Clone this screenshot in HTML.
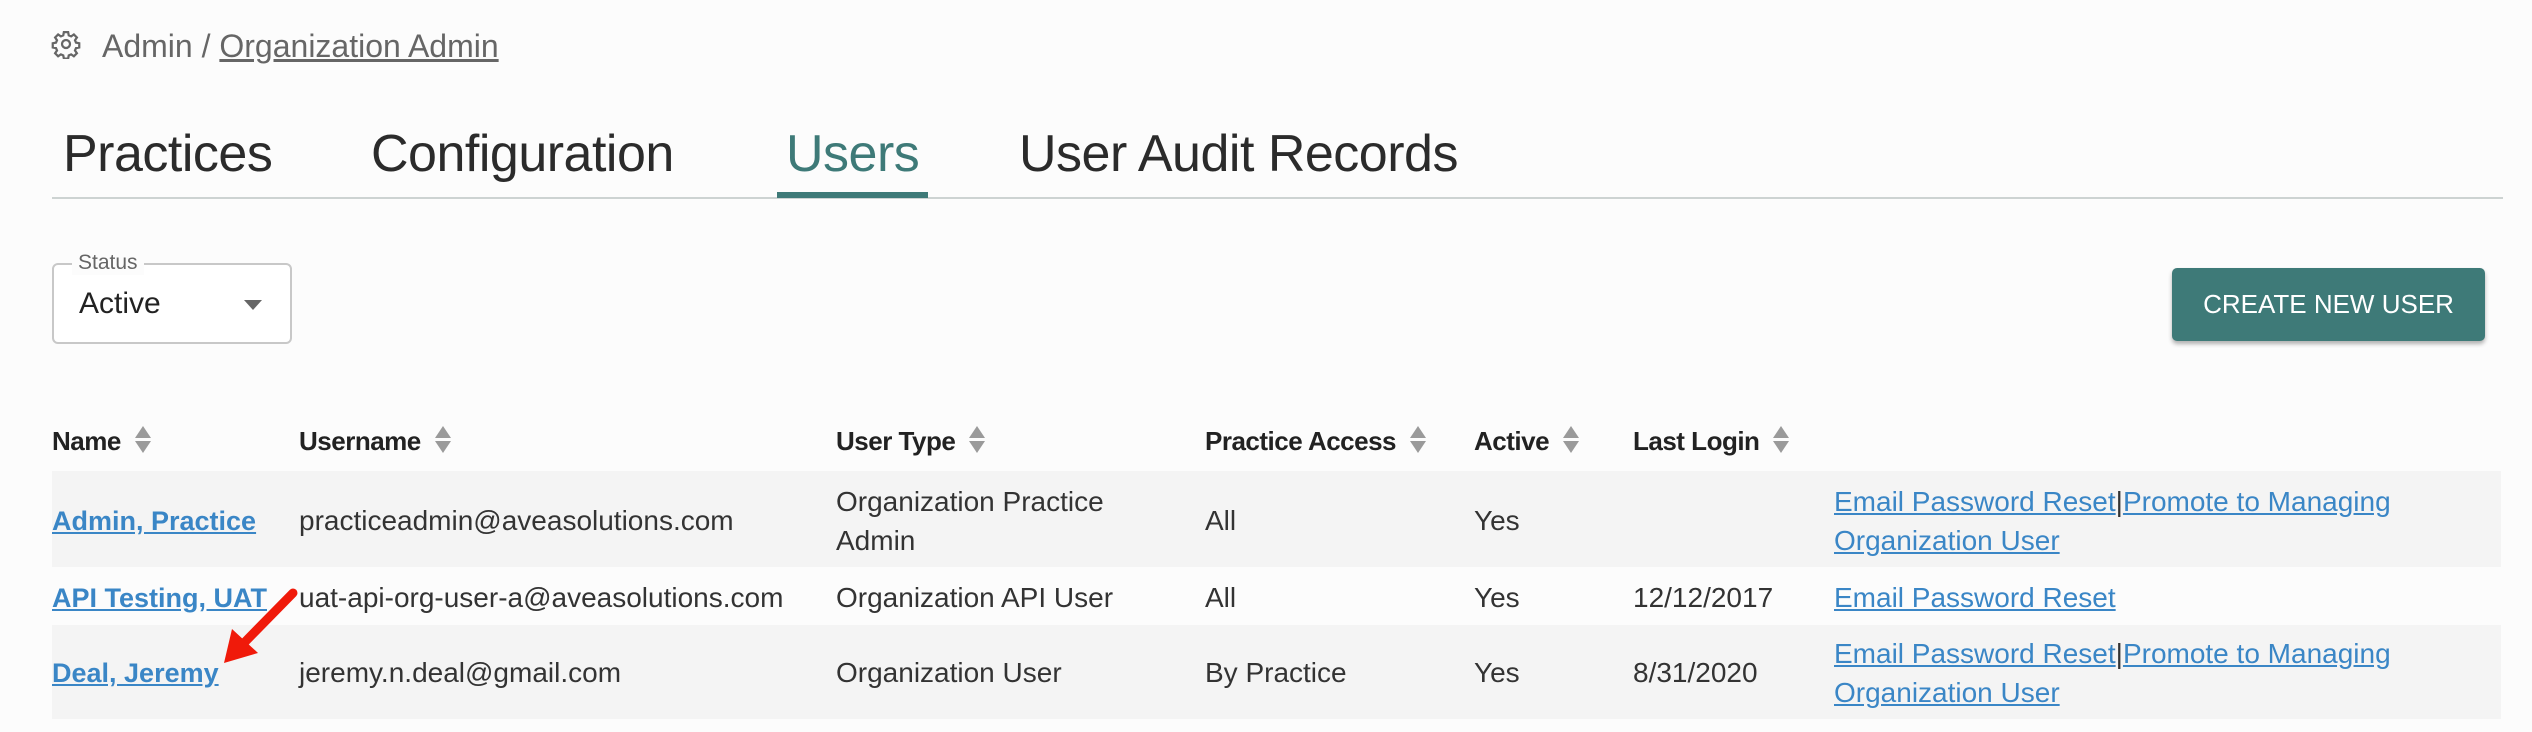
<!DOCTYPE html>
<html><head><meta charset="utf-8"><style>
body{margin:0;width:2532px;height:732px;background:#fcfcfc;font-family:"Liberation Sans",sans-serif;color:#333;position:relative;overflow:hidden}
.a{position:absolute;white-space:nowrap}
.tab{position:absolute;top:124px;font-size:52px;color:#2b2b2b;letter-spacing:-0.5px}
.h{position:absolute;top:426px;font-size:26px;font-weight:bold;color:#222;letter-spacing:-0.5px}
.s{display:inline-block;vertical-align:middle;margin-left:14px;width:16px;height:28px;position:relative;top:-3px}
.s:before{content:"";position:absolute;left:0;top:0;border-left:8px solid transparent;border-right:8px solid transparent;border-bottom:12px solid #9a9a9a}
.s:after{content:"";position:absolute;left:0;top:15px;border-left:8px solid transparent;border-right:8px solid transparent;border-top:12px solid #9a9a9a}
.row{position:absolute;left:52px;width:2449px}
.c{position:absolute;font-size:28px;line-height:39px;color:#333;white-space:nowrap}
a{color:#3a86c6;text-decoration:underline}
.b{font-weight:bold;font-size:27px}
</style></head><body>
<svg class="a" style="left:51px;top:29px" width="30" height="30" viewBox="0 0 24 24" fill="none" stroke="#666" stroke-width="1.8"><circle cx="12" cy="12" r="3.2"/><path d="M10.3 2.5h3.4l.5 2.6 1.9.8 2.2-1.5 2.4 2.4-1.5 2.2.8 1.9 2.6.5v3.4l-2.6.5-.8 1.9 1.5 2.2-2.4 2.4-2.2-1.5-1.9.8-.5 2.6h-3.4l-.5-2.6-1.9-.8-2.2 1.5-2.4-2.4 1.5-2.2-.8-1.9-2.6-.5v-3.4l2.6-.5.8-1.9-1.5-2.2 2.4-2.4 2.2 1.5 1.9-.8z"/></svg>
<div class="a" style="left:102px;top:28px;font-size:32px;color:#666">Admin / <span style="text-decoration:underline">Organization Admin</span></div>
<div class="tab" style="left:63px">Practices</div>
<div class="tab" style="left:371px">Configuration</div>
<div class="tab" style="left:786px;color:#3e7a78">Users</div>
<div class="tab" style="left:1019px">User Audit Records</div>
<div class="a" style="left:52px;top:197px;width:2451px;height:2px;background:#cdd3d2"></div>
<div class="a" style="left:777px;top:192px;width:151px;height:6px;background:#3e7a78"></div>
<div class="a" style="left:52px;top:263px;width:236px;height:77px;border:2px solid #c8c8c8;border-radius:6px;background:#fff"></div>
<div class="a" style="left:72px;top:251px;padding:0 6px;font-size:21px;color:#666;background:#fcfcfc">Status</div>
<div class="a" style="left:79px;top:287px;font-size:30px;color:#222">Active</div>
<div class="a" style="left:244px;top:300px;border-left:9px solid transparent;border-right:9px solid transparent;border-top:10px solid #666"></div>
<div class="a" style="left:2172px;top:268px;width:313px;height:73px;background:#3e7a78;border-radius:5px;box-shadow:0 3px 4px rgba(0,0,0,.3);color:#fff;font-size:26px;line-height:73px;text-align:center">CREATE NEW USER</div>
<div class="h" style="left:52px">Name<span class="s"></span></div>
<div class="h" style="left:299px">Username<span class="s"></span></div>
<div class="h" style="left:836px">User Type<span class="s"></span></div>
<div class="h" style="left:1205px">Practice Access<span class="s"></span></div>
<div class="h" style="left:1474px">Active<span class="s"></span></div>
<div class="h" style="left:1633px">Last Login<span class="s"></span></div>
<div class="row" style="top:471px;height:96px;background:#f4f4f4">
<div class="c" style="left:0;top:30px"><a class="b" href="#">Admin, Practice</a></div>
<div class="c" style="left:247px;top:30px">practiceadmin@aveasolutions.com</div>
<div class="c" style="left:784px;top:11px">Organization Practice<br>Admin</div>
<div class="c" style="left:1153px;top:30px">All</div>
<div class="c" style="left:1422px;top:30px">Yes</div>
<div class="c" style="left:1782px;top:11px"><a href="#">Email Password Reset</a>|<a href="#">Promote to Managing</a><br><a href="#">Organization User</a></div>
</div>
<div class="row" style="top:567px;height:58px">
<div class="c" style="left:0;top:11px"><a class="b" href="#">API Testing, UAT</a></div>
<div class="c" style="left:247px;top:11px">uat-api-org-user-a@aveasolutions.com</div>
<div class="c" style="left:784px;top:11px">Organization API User</div>
<div class="c" style="left:1153px;top:11px">All</div>
<div class="c" style="left:1422px;top:11px">Yes</div>
<div class="c" style="left:1581px;top:11px">12/12/2017</div>
<div class="c" style="left:1782px;top:11px"><a href="#">Email Password Reset</a></div>
</div>
<div class="row" style="top:625px;height:94px;background:#f4f4f4">
<div class="c" style="left:0;top:28px"><a class="b" href="#">Deal, Jeremy</a></div>
<div class="c" style="left:247px;top:28px">jeremy.n.deal@gmail.com</div>
<div class="c" style="left:784px;top:28px">Organization User</div>
<div class="c" style="left:1153px;top:28px">By Practice</div>
<div class="c" style="left:1422px;top:28px">Yes</div>
<div class="c" style="left:1581px;top:28px">8/31/2020</div>
<div class="c" style="left:1782px;top:9px"><a href="#">Email Password Reset</a>|<a href="#">Promote to Managing</a><br><a href="#">Organization User</a></div>
</div>
<svg class="a" style="left:210px;top:585px" width="100" height="90" viewBox="0 0 100 90"><path d="M83 8 L30 62" stroke="#f01a0a" stroke-width="9" stroke-linecap="round"/><path d="M14 78 L22 44 L48 68 Z" fill="#f01a0a"/></svg>
</body></html>
